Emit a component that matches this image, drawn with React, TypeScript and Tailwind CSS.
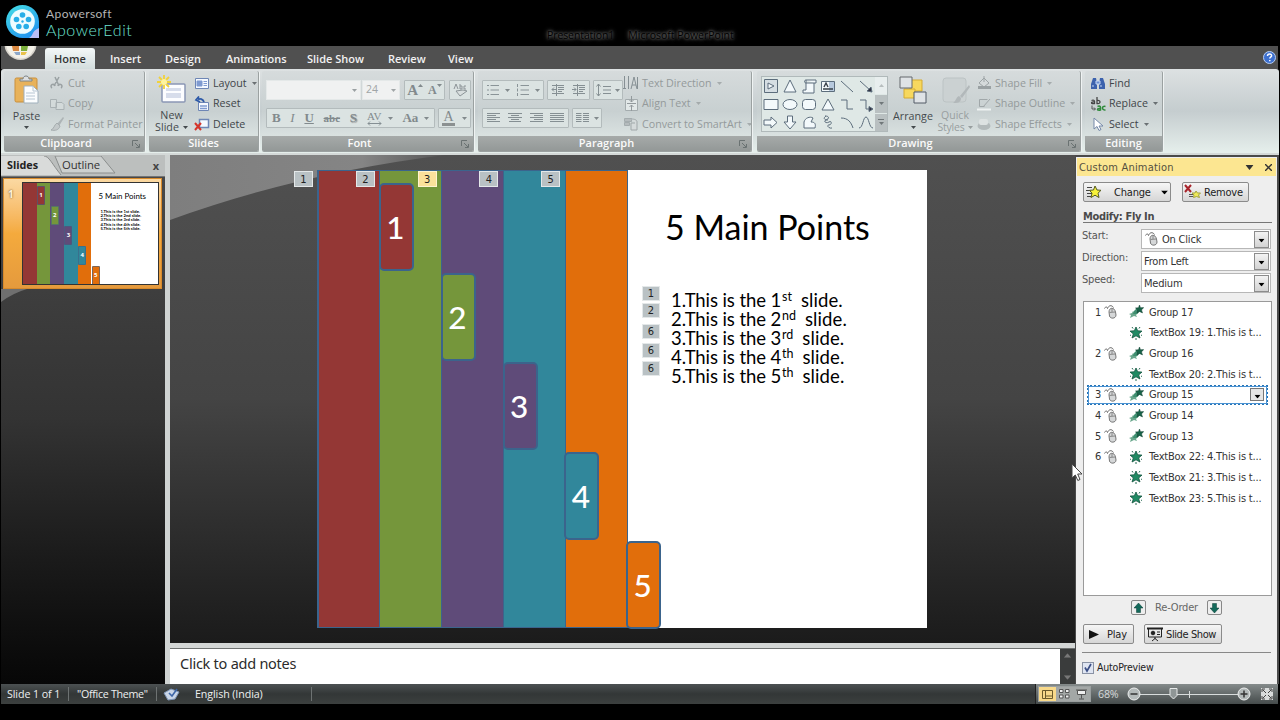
import type { CSSProperties, ReactNode } from 'react';
import clsx from 'clsx';

const COLORS = ['#943735', '#75963b', '#5f4b79', '#31879b', '#e16e0b'];

const POINTS = [
  { n: 1, suffix: 'st' },
  { n: 2, suffix: 'nd' },
  { n: 3, suffix: 'rd' },
  { n: 4, suffix: 'th' },
  { n: 5, suffix: 'th' },
];

const EFFECTS = [
  { order: '1', kind: 'path', name: 'Group 17' },
  { order: '', kind: 'star', name: 'TextBox 19: 1.This is t...' },
  { order: '2', kind: 'path', name: 'Group 16' },
  { order: '', kind: 'star', name: 'TextBox 20: 2.This is t...' },
  { order: '3', kind: 'path', name: 'Group 15', selected: true },
  { order: '4', kind: 'path', name: 'Group 14' },
  { order: '5', kind: 'path', name: 'Group 13' },
  { order: '6', kind: 'star', name: 'TextBox 22: 4.This is t...' },
  { order: '', kind: 'star', name: 'TextBox 21: 3.This is t...' },
  { order: '', kind: 'star', name: 'TextBox 23: 5.This is t...' },
];

function Caret({ className }: { className?: string }) {
  return (
    <svg className={clsx('shrink-0', className)} width="5" height="3" viewBox="0 0 5 3">
      <path d="M0 0h5L2.5 3z" fill="currentColor" />
    </svg>
  );
}

/* ---------- Title area ---------- */

function TitleBar() {
  return (
    <div className="h-[46px] flex shrink-0">
      <svg className="ml-[6px] mt-[4px] shrink-0" width="34" height="35" viewBox="0 0 34 35">
        <defs>
          <linearGradient id="reel" x1="0" y1="0" x2="0.6" y2="1">
            <stop offset="0" stopColor="#46e0e6" />
            <stop offset="1" stopColor="#2396ee" />
          </linearGradient>
        </defs>
        <path d="M16.500 1a16.500 16.500 0 1 0 0 33H33V17.500A16.500 16.500 0 0 0 16.500 1z" fill="url(#reel)" />
        <path d="M33 24v10H23c2-1 3-3 4-5s3-4 6-5z" fill="#b9bdf5" />
        <circle cx="16.500" cy="17.500" r="12.300" fill="#eefcff" />
        <g fill="#27aee8">
          <circle cx="16.500" cy="11" r="2.800" />
          <circle cx="10.500" cy="15.500" r="2.800" />
          <circle cx="22.500" cy="15.500" r="2.800" />
          <circle cx="12.800" cy="22.500" r="2.800" />
          <circle cx="20.200" cy="22.500" r="2.800" />
          <circle cx="16.500" cy="17.500" r="1.200" />
        </g>
      </svg>
      <div className="ml-[6px] w-[501px] pt-[6px] font-['Lato',sans-serif]">
        <div className="text-[12px] leading-[15px] tracking-[0.4px] text-[#b4b4b4]">Apowersoft</div>
        <div className="text-[16px] leading-[18px] tracking-[0.55px] font-light text-[#6fe3d2]">ApowerEdit</div>
      </div>
      <div className="pt-[28px] flex gap-[14px] text-[10.500px] leading-[15px] text-black whitespace-nowrap [text-shadow:0_0_3px_#888,0_0_5px_#777]">
        <span className="-tracking-[0.1px]">Presentation1</span>
        <span>Microsoft PowerPoint</span>
      </div>
    </div>
  );
}

function TabBar() {
  return (
    <div className="h-[23px] ml-px mr-[2px] bg-[#505050] flex text-[#f2f2f2] shrink-0 overflow-hidden font-semibold">
      <svg className="ml-[3px] shrink-0" width="33" height="15" viewBox="0 0 33 15">
        <circle cx="16.500" cy="-2" r="16" fill="#d8d4cc" />
        <circle cx="16.500" cy="-2" r="14.500" fill="#f4f1e8" />
        <path d="M8 0h7v5H9z" fill="#d98841" />
        <path d="M17 0h7l-1 5h-6z" fill="#7cae3b" />
        <path d="M10 6h6v3h-4z" fill="#8fa8c8" />
        <path d="M17 6h6l-2 3h-4z" fill="#e8c14a" />
      </svg>
      <div className="ml-[8px] mt-[2px] w-[50px] h-[21px] rounded-t-[3px] bg-gradient-to-b from-[#f4f8f8] to-[#d3dddd] text-[#333] text-center leading-[22px] text-[11px]">Home</div>
      <div className="flex h-[25px] items-center text-[11px] leading-none whitespace-nowrap">
        <span className="w-[56px] pl-[15px]">Insert</span>
        <span className="w-[61px] pl-[14px]">Design</span>
        <span className="w-[81px] pl-[14px]">Animations</span>
        <span className="w-[81px] pl-[14px]">Slide Show</span>
        <span className="w-[60px] pl-[14px]">Review</span>
        <span className="pl-[14px]">View</span>
      </div>
      <svg className="ml-auto mr-[2px] mt-[5px]" width="13" height="13" viewBox="0 0 13 13">
        <circle cx="6.500" cy="6.500" r="6" fill="#3d70cf" stroke="#b7cdf2" />
        <path d="M4.500 5c0-3 4.500-2.500 4 0-.3 1-1.700 1.200-1.700 2.600M6.800 9v1.200" stroke="#fff" strokeWidth="1.500" fill="none" />
      </svg>
    </div>
  );
}

/* ---------- Ribbon ---------- */

function Group({ label, className, launcher, children }: { label: string; className: string; launcher?: boolean; children: ReactNode }) {
  return (
    <div className={clsx('h-[81px] shrink-0 flex flex-col rounded-[2px] overflow-hidden border-r border-b border-[#9ba1a1] bg-gradient-to-b from-[#d6dbdc] via-[#c8d0d1] to-[#e4ecea] shadow-[1px_0_0_#eff3f3]', className)}>
      <div className="h-[65px] flex">{children}</div>
      <div className="h-[15px] flex bg-gradient-to-b from-[#a6aaa9] to-[#939897] text-[#fafafa] text-[11px] leading-[14px] font-semibold">
        <span className="flex-1 text-center">{label}</span>
        {launcher && (
          <svg className="mt-[4px] mx-[4px]" width="8" height="8" viewBox="0 0 8 8" fill="none" stroke="#6a7272">
            <path d="M.5 6V.5H6M3 3l4 4M7.500 4v3.500H4" />
          </svg>
        )}
      </div>
    </div>
  );
}

function Row({ icon, label, caret, disabled }: { icon: ReactNode; label: string; caret?: boolean; disabled?: boolean }) {
  return (
    <div className={clsx('h-[20.500px] flex items-center text-[10.700px] leading-none whitespace-nowrap', disabled ? 'text-[#949a9b]' : 'text-[#3f4549]')}>
      <svg className="mr-[3px] shrink-0" width="16" height="16" viewBox="0 0 16 16" fill="none">{icon}</svg>
      <span>{label}</span>
      {caret && <Caret className="ml-[5px] opacity-70" />}
    </div>
  );
}

function Box({ className, children }: { className: string; children: ReactNode }) {
  return (
    <div className={clsx('h-[20px] border border-[#b3bbbc] bg-[#dbe3e2] rounded-[1px] flex items-center justify-around text-[#828a8d] shrink-0', className)}>
      {children}
    </div>
  );
}

function Lines({ rows }: { rows: [number, number][] }) {
  return (
    <svg width="14" height="12" viewBox="0 0 14 12" stroke="#858f93" strokeWidth="1.200">
      {rows.map(([x1, x2], i) => (
        <path key={i} d={`M${x1} ${i * 2 + 1.5}H${x2}`} />
      ))}
    </svg>
  );
}

function ListIcon({ numbered }: { numbered?: boolean }) {
  return (
    <svg width="14" height="14" viewBox="0 0 14 14" stroke="#8a9498">
      <path d="M4.500 2.500H13M4.500 7H13M4.500 11.500H13" />
      <path d={numbered ? 'M1.500 1v3M1.500 5.500v3M1.500 10v3' : 'M1 2.500h2M1 7h2M1 11.500h2'} />
    </svg>
  );
}

function IndentIcon({ flip }: { flip?: boolean }) {
  return (
    <svg width="14" height="14" viewBox="0 0 14 14" stroke="#858f93" fill="none">
      <path d="M1 2.500h12M7 4.500h6M7 6.500h6M7 8.500h4M1 10.500h12M5.500 1v12" />
      <path d={flip ? 'M5 6.500H1M3 4.500l-2 2 2 2' : 'M0 6.500h4M2 4.500l2 2-2 2'} />
    </svg>
  );
}

const SHAPES: ReactNode[] = [
  <><path d="M1.500 1.500h13v13h-13z" fill="#d5dee3" /><path d="M5 5l6 3-6 3z" /></>,
  <path d="M8 2l6 12H2z" />,
  <path d="M5 2h10v3h-2v10H2v-3h3zM5 2c-2 0-2 3 0 3h8" />,
  <><path d="M1.500 3.500h13v10h-13z" /><path d="M9 4h5v9H9z" fill="#b7c9dd" stroke="none" /><path d="M4 9l2-4 2 4M3 11h10" stroke="#39414a" strokeWidth="1.400" /></>,
  <path d="M2 3l12 11" />,
  <><path d="M2 3l11 10" /><path d="M14 14l-5-1 4-4z" fill="#334" /></>,
  <path d="M1 3.500h14v10H1z" />,
  <ellipse cx="8" cy="8.500" rx="7" ry="5" />,
  <rect x="1.500" y="3.500" width="13" height="10" rx="3" />,
  <path d="M8 3l6 11H2z" />,
  <path d="M2 4h6v9h6" fill="none" />,
  <><path d="M2 4h6v9h4" fill="none" /><path d="M11 10.500v5l4-2.500z" fill="#334" /></>,
  <path d="M1 6h7V3l6 5.500-6 5.500v-3H1z" />,
  <path d="M5.500 2v6H2l6 7 6-7h-3.500V2z" />,
  <path d="M3 14V8c1-4 6-6 9-4l-2 4c4 0 5 2 4 6z" />,
  <path d="M5 2c5 0 4 3 1 4s0 4 3 2 3 3 0 3 0 4 3 3M6 2c-3 2-2 4 2 4" fill="none" />,
  <path d="M2 4c7 0 10 4 12 10" fill="none" />,
  <path d="M1 14C5 14 5 3 8 3s3 11 7 11" fill="none" />,
];

function Ribbon() {
  return (
    <div className="h-[86px] mx-px pl-[3px] pt-[2px] flex shrink-0 rounded-t-[3px] bg-gradient-to-b from-[#dde1e2] via-[#c5cdcf] to-[#e6efec] border-b-2 border-[#d4d9d8]">
      <Group label="Clipboard" className="w-[141px]" launcher>
        <div className="w-[45px] flex flex-col items-center text-[10.700px] leading-[12px] text-[#444a4d] pt-[4px]">
          <svg width="26" height="30" viewBox="0 0 26 30">
            <rect x="1" y="3" width="22" height="24" rx="1.500" fill="#e8b25a" stroke="#c98f3c" />
            <path d="M6 6V4h3c0-4 6-4 6 0h3v2z" fill="#dcdfe2" stroke="#7d8386" />
            <path d="M10 11h9l5 5v12H10z" fill="#fbfdfe" stroke="#9fb0bd" />
            <path d="M19 11v5h5M12 18h9M12 21h9M12 24h9" stroke="#b7c6d3" fill="none" />
          </svg>
          <span className="mt-[5px]">Paste</span>
          <Caret className="mt-[4px]" />
        </div>
        <div className="pt-[2px]">
          <Row disabled label="Cut" icon={<path d="M6 2l4 9M10 2L5 11M3 13a2 2 0 1 1 3-2M12 13a2 2 0 1 0-3-2" stroke="#9aa1a3" strokeWidth="1.500" />} />
          <Row disabled label="Copy" icon={<path d="M1.500 3.500h6v8h-6zM7 6.500h6l2 2v5H7z" fill="#d3dada" stroke="#a9b1b3" />} />
          <Row disabled label="Format Painter" icon={<><path d="M14 1L8 8l2 2 5-8z" fill="#adb4b6" /><path d="M8 7l3 3c-1 4-5 5-9 4 3-1 3-5 6-7z" fill="#c3c9ca" stroke="#a5acae" /></>} />
        </div>
      </Group>

      <Group label="Slides" className="w-[110px] ml-[4px]">
        <div className="w-[45px] flex flex-col items-center text-[10.700px] leading-[12px] text-[#444a4d] pt-[4px]">
          <svg width="30" height="30" viewBox="0 0 30 30">
            <rect x="5" y="9" width="23" height="18" rx="1" fill="#fcfdff" stroke="#8b97b5" strokeWidth="1.500" />
            <path d="M9 13h15v3H9zM9 18h15v5H9z" fill="#d7ddeb" />
            <path d="M7 0v14M0 7h14M2 2l10 10M12 2L2 12" stroke="#f1d23a" strokeWidth="1.800" />
            <circle cx="7" cy="7" r="3" fill="#fdf3a0" />
          </svg>
          <span className="mt-[4px]">New</span>
          <span className="flex items-center gap-[4px]">Slide <Caret /></span>
        </div>
        <div className="pt-[2px]">
          <Row label="Layout" caret icon={<><path d="M1.500 3.500h13v10h-13z" fill="#f5f9ff" stroke="#6e86b5" /><path d="M3 6h5v5H3zM9.500 6.500H13M9.500 8.500H13M9.500 10.500H13" fill="#7f9ad0" stroke="#7f9ad0" /></>} />
          <Row label="Reset" icon={<><path d="M4.500 6.500h10v8h-10z" fill="#f5f9ff" stroke="#6e86b5" /><path d="M6 10h7M6 12.500h7" stroke="#7f9ad0" strokeWidth="1.500" /><path d="M10 6C9 3 6 2 4 3.500M5 .5L2 4l4 2" stroke="#2e5aa8" strokeWidth="1.800" /></>} />
          <Row label="Delete" icon={<><path d="M5.500 3.500h9v8h-9z" fill="#f5f9ff" stroke="#6e86b5" strokeWidth="1.500" /><path d="M1 7l6 7M7 7l-6 7" stroke="#d5352b" strokeWidth="2" /></>} />
        </div>
      </Group>

      <Group label="Font" className="w-[212px] ml-[3px]" launcher>
        <div className="pl-[4px] pt-[9px] font-['Liberation_Serif',serif]">
          <div className="flex">
            <div className="w-[95px] h-[20px] bg-[#f0f1f1] border border-[#e4e8e8] flex items-center justify-end pr-[3px] text-[#9aa0a2]"><Caret /></div>
            <div className="w-[38px] h-[20px] ml-px bg-[#f0f1f1] border border-[#e4e8e8] flex items-center justify-between px-[3px] text-[#a0a5a7] text-[10.500px] font-['Open_Sans',sans-serif]">24<Caret /></div>
            <Box className="w-[41px] ml-[4px]">
              <span className="flex text-[15px] leading-[16px] font-bold">A<Caret className="rotate-180 mt-[2px]" /></span>
              <span className="flex text-[12px] leading-[14px] font-bold">A<Caret className="mt-px" /></span>
            </Box>
            <Box className="w-[22px] ml-[4px]">
              <svg width="16" height="16" viewBox="0 0 16 16" fill="none" stroke="#8d9598">
                <path d="M2 7l2-5 2 5M8 2v5h2V4H8M14 4h-2v3h2M4 9l4 5 7-5-4-1z" fill="#d9dfdf" />
              </svg>
            </Box>
          </div>
          <div className="flex mt-[8px]">
            <Box className="w-[169px]">
              <b className="text-[13px]">B</b>
              <i className="text-[13px]">I</i>
              <b className="text-[13px] underline">U</b>
              <b className="text-[11px] line-through">abc</b>
              <b className="text-[13px] [text-shadow:1px_1px_1px_#999]">S</b>
              <span className="flex flex-col items-center text-[11px] leading-[10px]">
                AV
                <svg width="15" height="5" viewBox="0 0 15 5" fill="none" stroke="#858f93"><path d="M1 2.500h13M3 .5l-2 2 2 2M12 .5l2 2-2 2" /></svg>
              </span>
              <Caret className="-ml-[4px]" />
              <b className="text-[13px]">Aa</b>
              <Caret className="-ml-[4px]" />
            </Box>
            <Box className="w-[33px] ml-[3px]">
              <span className="text-[14px] leading-[13px] border-b-[3px] border-[#8b9091] px-[1px]">A</span>
              <Caret />
            </Box>
          </div>
        </div>
      </Group>

      <Group label="Paragraph" className="w-[274px] ml-[4px]" launcher>
        <div className="pl-[4px] pt-[9px] w-[147px]">
          <div className="flex">
            <Box className="w-[62px]"><ListIcon /><Caret className="-ml-[2px]" /><ListIcon numbered /><Caret className="-ml-[2px]" /></Box>
            <Box className="w-[43px] ml-[3px]"><IndentIcon flip /><IndentIcon /></Box>
            <Box className="w-[30px] ml-[3px]">
              <svg width="15" height="14" viewBox="0 0 15 14" stroke="#858f93" fill="none">
                <path d="M7 3.500h8M7 7h8M7 10.500h8M2.500 1v12M.5 3.500l2-2.500 2 2.500M.5 10.500l2 2.500 2-2.500" />
              </svg>
              <Caret />
            </Box>
          </div>
          <div className="flex mt-[8px]">
            <Box className="w-[87px]">
              <Lines rows={[[0, 13], [0, 9], [0, 13], [0, 9], [0, 13]]} />
              <Lines rows={[[0, 14], [3, 11], [0, 14], [3, 11], [1, 13]]} />
              <Lines rows={[[1, 14], [5, 14], [1, 14], [5, 14], [1, 14]]} />
              <Lines rows={[[0, 14], [0, 14], [0, 14], [0, 14], [0, 14]]} />
            </Box>
            <Box className="w-[30px] ml-[3px]">
              <svg width="13" height="12" viewBox="0 0 13 12" stroke="#858f93">
                <path d="M0 1.500h5.500M0 3.500h5.500M0 5.500h5.500M0 7.500h5.500M0 9.500h5.500M7 1.500h6M7 3.500h6M7 5.500h6M7 7.500h6M7 9.500h6" />
              </svg>
              <Caret />
            </Box>
          </div>
        </div>
        <div className="pt-[2px]">
          <Row disabled caret label="Text Direction" icon={<path d="M1.500 1v13M5.500 1v13M8 14l3-12 3 12M9 10h4M0 13.500h3M14.500 2v12" stroke="#858f93" />} />
          <Row disabled caret label="Align Text" icon={<><path d="M2.500 3.500h12v11h-12z" fill="#e2e8e8" stroke="#a4acae" /><path d="M8.500 0v6M8.500 15V9M6.500 4l2 2 2-2M6.500 11l2-2 2 2M4 7.500h9" stroke="#92999c" /></>} />
          <Row disabled caret label="Convert to SmartArt" icon={<><path d="M1.500 2.500h7v3h-7zM1.500 6.500h5v3h-5z" fill="#b5bbbd" stroke="#a4acae" /><path d="M8 3c4 0 6 1 6 3v8H8V7h4" fill="#d5dadb" stroke="#a0a7a9" /></>} />
        </div>
      </Group>

      <Group label="Drawing" className="w-[324px] ml-[5px]" launcher>
        <div className="mt-[5px] ml-[4px] w-[127px] h-[56px] border border-[#b0b9ba] bg-[#dfe8e6] flex shrink-0">
          <div className="w-[113px] grid grid-cols-6 grid-rows-3">
            {SHAPES.map((shape, i) => (
              <svg key={i} className="m-auto" width="16" height="16" viewBox="0 0 16 16" fill="#f3f9fb" stroke="#5c6d7c">{shape}</svg>
            ))}
          </div>
          <div className="w-[12px] flex flex-col gap-px text-[#707779]">
            <div className="flex-1 bg-[#e8eeee] flex items-center justify-center"><Caret className="rotate-180 opacity-40" /></div>
            <div className="flex-1 bg-[#b9c0c1] flex items-center justify-center"><Caret /></div>
            <div className="flex-1 bg-[#b9c0c1] flex flex-col items-center justify-center gap-[2px]"><span className="w-[6px] h-px bg-[#707779]" /><Caret /></div>
          </div>
        </div>
        <div className="w-[50px] shrink-0 flex flex-col items-center text-[10.700px] leading-[12px] text-[#444a4d] pt-[4px]">
          <svg width="30" height="30" viewBox="0 0 30 30">
            <path d="M12 5h12v11H12z" fill="#f7d85e" stroke="#d5ab32" />
            <path d="M6 14h11v9H6z" fill="#f7d85e" stroke="#d5ab32" />
            <path d="M2 2h12v11H2z" fill="#dfe3e6" stroke="#64696d" />
            <path d="M16 17h12v11H16z" fill="#dfe3e6" stroke="#525a66" />
          </svg>
          <span className="mt-[5px]">Arrange</span>
          <Caret className="mt-[4px]" />
        </div>
        <div className="w-[34px] shrink-0 flex flex-col items-center text-[10.500px] leading-[12px] text-[#989e9f] pt-[4px]">
          <svg width="30" height="30" viewBox="0 0 30 30">
            <rect x="3" y="3" width="23" height="24" rx="3" fill="#cbd1d2" stroke="#bcc3c4" />
            <path d="M29 10l-9 11 2 2 8-11zM19 21c-3 1-3 5-6 7 4 0 8 0 8-5z" fill="#b2b8ba" />
          </svg>
          <span className="mt-[4px]">Quick</span>
          <span className="flex items-center gap-[3px] whitespace-nowrap -tracking-[0.2px]">Styles <Caret /></span>
        </div>
        <div className="pt-[2px] pl-[4px]">
          <Row disabled caret label="Shape Fill" icon={<><path d="M3 8l5-5 5 5-5 4z" fill="#d5dadb" stroke="#9da4a6" /><path d="M2 12.500h13" stroke="#9aa1a3" strokeWidth="3" /><path d="M8 1v6" stroke="#9da4a6" /></>} />
          <Row disabled caret label="Shape Outline" icon={<><path d="M3.500 3.500h8M3.500 3.500v7h5M14 3l-7 8" stroke="#a0a7a9" /><path d="M1 13.500h14" stroke="#eef2f2" strokeWidth="2" /></>} />
          <Row disabled caret label="Shape Effects" icon={<><ellipse cx="8" cy="10" rx="6.500" ry="4" fill="#b3babb" /><rect x="3" y="3" width="9" height="6" rx="2" fill="#dde2e2" /></>} />
        </div>
      </Group>

      <Group label="Editing" className="w-[78px] ml-[4px]">
        <div className="pt-[2px] pl-[5px]">
          <Row label="Find" icon={<><path d="M3 3h3l1 5v6H1V9zM10 3h3l2 6v5H9V8z" fill="#3c62ad" /><path d="M6 6h4v3H6zM3 10v2M11 10v2" fill="#6b8fd0" stroke="#c4d6f4" /></>} />
          <Row label="Replace" caret icon={<><path d="M1.500 4.500c2-1 3 0 3 1v2c-4 1-4-2 0-1.500M7 1v6.500c4 1 4-4 0-3" stroke="#444" strokeWidth="1.300" /><path d="M2 9.500v3.500h3M4 11.500L5.500 13 4 14.500" stroke="#555" /><path d="M7.500 10.500c2-1 3 0 3 1v2.500c-4 1-4-2 0-1.500M15.500 10.500c-4-1-4 4 0 3.500" stroke="#2e8a3a" strokeWidth="1.500" /></>} />
          <Row label="Select" caret icon={<path d="M4 2v11l3-2.500 2 4 2-1-2-3.500h4z" fill="#fff" stroke="#7488a8" />} />
        </div>
      </Group>
    </div>
  );
}

/* ---------- Left pane ---------- */

function Thumbnail() {
  return (
    <div className="relative w-[137px] h-[103px] border border-[#333] bg-white flex overflow-hidden">
      {COLORS.map((c) => (
        <div key={c} className="w-[13.700px] h-full shrink-0" style={{ background: c }} />
      ))}
      <div className="pt-[7px] pl-[7px] text-black font-['Lato',sans-serif] whitespace-nowrap">
        <div className="text-[7.900px] leading-[12px]">5 Main Points</div>
        <div className="pl-[2px] pt-[8px] text-[4.200px] leading-[4.200px] font-bold">
          {POINTS.map(({ n, suffix }) => (
            <div key={n}>{n}.This is the {n}{suffix} slide.</div>
          ))}
        </div>
      </div>
      {COLORS.map((c, i) => (
        <div
          key={c}
          className="absolute w-[8px] h-[19px] rounded-[1px] border border-[#3f6183]/60 text-white text-[6px] leading-[17px] text-center font-bold"
          style={{ background: c, left: 14 + i * 13.7, top: 3 + i * 20 }}
        >
          {i + 1}
        </div>
      ))}
    </div>
  );
}

function SlidesPane() {
  return (
    <div className="w-[164px] shrink-0 flex flex-col bg-gradient-to-b from-[#4a4a4a] via-[#333] to-[#070707]">
      <div className="h-[22px] shrink-0 bg-[#bcbfbe] border-b border-[#747474] flex items-center relative">
        <svg className="absolute left-0 top-px" width="120" height="20" viewBox="0 0 120 20">
          <path d="M54 0h46l14 17H61z" fill="#cdd0cf" stroke="#8b8e8d" />
          <path d="M0 0h43c5 0 8 8 17 19H0z" fill="#d9dbda" />
          <path d="M43 0c5 0 8 8 17 19" fill="none" stroke="#8b8e8d" />
        </svg>
        <span className="relative w-[61px] pl-[6px] font-bold text-[10.800px] text-[#222]">Slides</span>
        <span className="relative text-[11.300px] -tracking-[0.1px] text-[#333]">Outline</span>
        <span className="relative ml-auto mr-[6px] text-[11px] text-[#444] font-bold leading-none">x</span>
      </div>
      <div className="mt-px ml-[2px] w-[159px] h-[111px] shrink-0 flex pt-[3px] border border-[#d88a2b] bg-gradient-to-b from-[#fbd9a2] via-[#f4aa3d] to-[#e59a3d]">
        <span className="w-[18px] pl-[4px] pt-[7px] text-[10px] leading-none font-bold text-[#fff3d9] [text-shadow:0_0_2px_#5a3a10]">1</span>
        <Thumbnail />
      </div>
      <svg className="shrink-0" width="26" height="14" viewBox="0 0 26 14"><path d="M0 0h26Q12 4 0 13z" fill="#6f6f6f" /></svg>
    </div>
  );
}

/* ---------- Slide canvas ---------- */

function Tag({ children, active, className, style }: { children: ReactNode; active?: boolean; className?: string; style?: CSSProperties }) {
  return (
    <div
      className={clsx(
        "absolute border text-[11px] text-center text-[#222] font-['DejaVu_Sans_Condensed','DejaVu_Sans',sans-serif]",
        active ? 'bg-[#fbe19a] border-[#fff3cf]' : 'bg-[#b9c1c4] border-[#e4e8e9]',
        className,
      )}
      style={style}
    >
      {children}
    </div>
  );
}

function Slide() {
  const tagTops = [116, 133, 154, 173, 191];
  return (
    <div className="relative ml-[147px] mt-[15px] w-[610px] h-[458px] bg-white flex font-['Lato',sans-serif] text-black">
      {COLORS.map((c, i) => (
        <div key={c} className="w-[62px] h-full border-y border-l-2 border-[#3b648c] shrink-0" style={{ background: c, borderLeftWidth: i === 0 ? 2 : 1.5 }} />
      ))}
      <div className="border-l border-[#3b648c] pl-[37px] pt-[36px] whitespace-nowrap">
        <div className="text-[34px] leading-[42px]">5 Main Points</div>
        <div className="pl-[6px] pt-[42px] text-[18.500px] leading-[20px]">
          {POINTS.map(({ n, suffix }) => (
            <div key={n} className="h-[19px] flex">
              <span className="w-[111px] -tracking-[0.08px]">{n}.This is the {n}</span>
              <span className="text-[12.500px] leading-[13px]">{suffix}</span>
              <span className="ml-[9px] tracking-[0.1px]">slide.</span>
            </div>
          ))}
        </div>
      </div>
      {COLORS.map((c, i) => (
        <div
          key={c}
          className="absolute w-[35px] h-[88px] rounded-[5px] border-2 border-[#3b648c] text-white text-[31.500px] leading-[85px] text-center pr-[2px] font-medium"
          style={{ background: c, left: 62 + i * 61.8, top: 13 + i * 89.5 }}
        >
          {i + 1}
        </div>
      ))}
      {[0, 1, 2, 3, 4].map((i) => (
        <Tag key={i} active={i === 2} className="w-[19px] h-[16px] leading-[15px]" style={{ left: -23 + i * 61.8, top: 1 }}>{i + 1}</Tag>
      ))}
      {['1', '2', '6', '6', '6'].map((n, i) => (
        <Tag key={i} className="w-[18px] h-[15px] leading-[14px]" style={{ left: 325, top: tagTops[i] }}>{n}</Tag>
      ))}
    </div>
  );
}

function Editor() {
  return (
    <div className="w-[905px] shrink-0 flex flex-col">
      <div className="relative h-[488px] bg-gradient-to-b from-[#505050] via-[#444] to-[#1b1b1b] overflow-hidden">
        <svg className="absolute left-0 top-0" width="300" height="70" viewBox="0 0 300 70">
          <defs>
            <linearGradient id="swoosh" x1="0" y1="0" x2="1" y2="0">
              <stop offset="0" stopColor="#7e7e7e" />
              <stop offset="0.7" stopColor="#858585" />
              <stop offset="1" stopColor="#555" />
            </linearGradient>
          </defs>
          <path d="M0 0h275Q130 18 0 65z" fill="url(#swoosh)" />
        </svg>
        <Slide />
      </div>
      <div className="h-[6px] bg-[#d3d6d5] border-b border-[#6e7170]" />
      <div className="flex-1 flex">
        <div className="w-[890px] bg-white pl-[10px] pt-[5px] text-[14.500px] leading-[19px] -tracking-[0.25px] text-[#2b2b2b] font-['Noto_Sans',sans-serif]">Click to add notes</div>
        <div className="flex-1 bg-[#3a3c3c] flex flex-col items-center justify-between py-[5px] text-[#777]">
          <Caret className="rotate-180 scale-150" />
          <Caret className="scale-150" />
        </div>
      </div>
    </div>
  );
}

/* ---------- Custom Animation pane ---------- */

function MouseIcon() {
  return (
    <svg width="13" height="14" viewBox="0 0 13 14" fill="none">
      <path d="M.5 3.500c1-2 2.500-2 3 0 1-3 4-4 6-1" stroke="#666" />
      <path d="M5 7c0-5 5.500-5 6.500 0l.5 3c0 4-6 4-6.500 1z" fill="#d5d7d8" stroke="#777" />
      <path d="M8 3.500V7M5.500 7.500L11 7" stroke="#888" />
    </svg>
  );
}

function EffectIcon({ kind }: { kind: string }) {
  if (kind === 'path') {
    return (
      <svg width="15" height="14" viewBox="0 0 15 14">
        <path d="M1 13l1-3-2-1 3-1 1-2 2 2h3L7 10l1 2-3-1z" fill="#69a78c" />
        <path d="M4 9l1-3 3-3 3 3-3 3z" fill="#3f8f70" />
        <path d="M10.500 0l1 2.800 3.200-.2-2.200 2.300 1 3-3-1.400L8 8l.6-3L6.500 3l3-.3z" fill="#176348" stroke="#123f30" strokeWidth=".5" />
      </svg>
    );
  }
  return (
    <svg width="14" height="14" viewBox="0 0 14 14">
      <path d="M7 1l1.700 3.800 4.300.3-3.300 2.800L11 12 7 9.800 3 12l1.300-4.100L1 5.100l4.300-.3z" fill="#1f8a63" stroke="#155440" strokeWidth=".8" />
      <path d="M3 1l1 1.500M11 1l-1 1.500M7 12v2M1 9.500l1-.5M13 9.500l-1-.5" stroke="#276b53" />
    </svg>
  );
}

function DropButton() {
  return (
    <div className="w-[15px] h-[17px] border border-[#8c8c8c] bg-gradient-to-b from-[#f3f3f3] to-[#d3d3d3] flex items-center justify-center text-black">
      <Caret className="scale-125 mt-[2px]" />
    </div>
  );
}

function Field({ label, icon, value }: { label: string; icon?: ReactNode; value: string }) {
  return (
    <div className="h-[22px] flex">
      <span className="w-[59px] -ml-px text-[#555] leading-[14px]">{label}</span>
      <div className="w-[130px] h-[20px] bg-white border border-[#b7b7b7] flex items-center gap-[4px] pl-[2px] pr-[1px] text-[#333]">
        {icon && <span className="pl-px">{icon}</span>}
        <span className="flex-1">{value}</span>
        <DropButton />
      </div>
    </div>
  );
}

function PaneButton({ className, children }: { className: string; children: ReactNode }) {
  return (
    <div className={clsx('h-[20px] border border-[#8b8b8b] rounded-[2px] bg-gradient-to-b from-[#f6f6f6] to-[#d6d6d6] flex items-center text-[#222]', className)}>
      {children}
    </div>
  );
}

function AnimationPane() {
  return (
    <div className="ml-px w-[201px] h-[528px] mt-[2px] bg-[#eeeeee] flex flex-col text-[11px] leading-[13px] whitespace-nowrap -tracking-[0.2px] font-['DejaVu_Sans_Condensed','DejaVu_Sans',sans-serif]">
      <div className="h-[18px] mx-px mt-px bg-[#fce691] flex items-center pl-[2px] text-[#55503f] shrink-0">
        <span className="flex-1 tracking-[0.2px]">Custom Animation</span>
        <Caret className="scale-[1.6] text-[#333] mr-[13px]" />
        <svg className="mr-[4px]" width="7" height="7" viewBox="0 0 7 7" stroke="#333" strokeWidth="1.400"><path d="M0 0l7 7M7 0L0 7" /></svg>
      </div>
      <div className="pl-[7px] pt-[6px]">
        <div className="flex gap-[11px]">
          <PaneButton className="w-[88px] pl-[2px]">
            <svg width="16" height="14" viewBox="0 0 16 14"><path d="M1 2.500h5M0 5.500h5M1 8.500h5M1 11.500h4" stroke="#444" /><path d="M9 1l2 4 4 .3-3 2.900 1 4.300-4-2.300-4 2.300 1-4.300L3.500 5.300 7.500 5z" fill="#f7f23a" stroke="#555b20" /></svg>
            <span className="ml-[12px] flex-1">Change</span>
            <Caret className="scale-[1.4] text-black mr-[3px]" />
          </PaneButton>
          <PaneButton className="w-[67px] pl-[1px]">
            <svg width="17" height="16" viewBox="0 0 17 16"><path d="M1 1l6 7M7 1L1 8" stroke="#a8242b" strokeWidth="2" /><path d="M5 10.500h4M5 12.500h4" stroke="#555" /><path d="M12 7l1.500 2h3l-2 2 1 2.500-3-1-3 1 .5-2.500-2-2h3z" fill="#efea5a" stroke="#a5a341" /></svg>
            <span className="ml-[3px]">Remove</span>
          </PaneButton>
        </div>
        <div className="mt-[9px] mb-[6px] w-[189px] h-[12px] border-b border-[#777] font-bold text-[#4a4a4a] leading-[11px] -tracking-[0.35px]">Modify: Fly In</div>
        <Field label="Start:" icon={<MouseIcon />} value="On Click" />
        <Field label="Direction:" value="From Left" />
        <Field label="Speed:" value="Medium" />
      </div>
      <div className="ml-[7px] mt-[6px] w-[189px] h-[295px] shrink-0 bg-white border border-[#9a9a9a] text-[#333]">
        {EFFECTS.map((e) => (
          <div
            key={e.name}
            className={clsx('mx-[3px] h-[20.650px] flex items-center border-2', e.selected ? 'border-dotted border-[#2573b5] outline outline-1 -outline-offset-2 outline-[#4b93d3]' : 'border-transparent')}
          >
            <span className="w-[14px] pl-[6px]">{e.order}</span>
            <span className="w-[26px] pl-px">{e.order && <MouseIcon />}</span>
            <span className="w-[20px]"><EffectIcon kind={e.kind} /></span>
            <span className="flex-1">{e.name}</span>
            {e.selected && <div className="w-[14px] h-[13px] border border-[#777] bg-[#e5e5e5] flex items-center justify-center text-black mr-[2px] shrink-0"><Caret className="scale-125 mt-[3px]" /></div>}
          </div>
        ))}
      </div>
      <div className="h-[15px] mt-[4px] flex justify-center items-center gap-[9px] text-[#666]">
        <div className="w-[15px] h-[15px] border border-[#888] rounded-[2px] flex items-center justify-center">
          <svg width="9" height="10" viewBox="0 0 9 10"><path d="M4.500 0L9 5H6.500v4.500h-4V5H0z" fill="#13695a" stroke="#0b3c34" strokeWidth=".5" /></svg>
        </div>
        Re-Order
        <div className="w-[15px] h-[15px] border border-[#888] rounded-[2px] flex items-center justify-center">
          <svg width="9" height="10" viewBox="0 0 9 10"><path d="M4.500 10L9 5H6.500V.5h-4V5H0z" fill="#13695a" stroke="#0b3c34" strokeWidth=".5" /></svg>
        </div>
      </div>
      <div className="mt-[9px] ml-[7px] flex gap-[10px]">
        <PaneButton className="w-[51px] pl-[5px]">
          <svg width="10" height="9" viewBox="0 0 10 9"><path d="M0 0l10 4.500L0 9z" fill="#111" /></svg>
          <span className="ml-[8px]">Play</span>
        </PaneButton>
        <PaneButton className="w-[78px] pl-[2px]">
          <svg width="16" height="15" viewBox="0 0 16 15" fill="none" stroke="#222"><path d="M0 1.500h16" strokeWidth="2" /><path d="M1.500 2v8h13V2M8 10v2M5 14l3-2.500 3 2.500M10 5h3M10 7.500h3" /><circle cx="6" cy="6" r="1.800" fill="#222" /></svg>
          <span className="ml-[3px] -tracking-[0.4px]">Slide Show</span>
        </PaneButton>
      </div>
      <div className="mx-[6px] mt-[8px] border-b border-[#888]" />
      <div className="ml-[6px] mt-[8px] flex items-center gap-[3px] text-[10.500px] text-[#222]">
        <div className="w-[12px] h-[12px] border border-[#8a93a5] bg-[#dfe5f2]">
          <svg width="10" height="10" viewBox="0 0 10 10"><path d="M2 4.500L4 8l4-7" stroke="#3b4f86" strokeWidth="1.700" fill="none" /></svg>
        </div>
        AutoPreview
      </div>
    </div>
  );
}

/* ---------- Status bar ---------- */

function StatusBar() {
  return (
    <div className="h-[20px] ml-px mr-[2px] shrink-0 flex items-center bg-gradient-to-b from-[#4c5152] via-[#333737] to-[#3c403f] text-[#eef0f0] text-[10.700px] leading-none whitespace-nowrap">
      <span className="w-[68px] pl-[6px] h-[14px] leading-[14px] border-r border-[#6d7272] -tracking-[0.1px]">Slide 1 of 1</span>
      <span className="w-[88px] pl-[8px] h-[14px] leading-[14px] border-r border-[#6d7272] -tracking-[0.3px]">"Office Theme"</span>
      <svg className="ml-[6px]" width="17" height="14" viewBox="0 0 17 14">
        <path d="M1 6l7-4 8 3-4 7-7 1z" fill="#c9d6e8" stroke="#7e96b8" />
        <path d="M6 6l3 3 5-7" stroke="#3d66a8" strokeWidth="1.600" fill="none" />
      </svg>
      <span className="w-[132px] pl-[15px] h-[14px] leading-[14px] border-r border-[#6d7272] -tracking-[0.1px]">English (India)</span>
      <div className="ml-auto w-[243px] h-full flex items-center pl-[2px] border-l border-[#222] bg-gradient-to-b from-[#858b8b] to-[#454b4b]">
        <div className="w-[53px] h-[16px] flex items-center border border-[#9a9f9f] bg-[#a3a7a6]">
          <div className="w-[17px] h-full bg-[#f8d98a] flex items-center justify-center">
            <svg width="11" height="9" viewBox="0 0 11 9" fill="none" stroke="#6b5a2b"><path d="M.5.5h10v8H.5zM3.500.5v8M3.500 6h7" /></svg>
          </div>
          <svg className="mx-auto" width="11" height="10" viewBox="0 0 11 10" fill="#eee" stroke="#555"><path d="M.5.5h3.500v3H.5zM6.500.5H10v3H6.500zM.5 6h3.500v3H.5zM6.500 6H10v3H6.500z" /></svg>
          <svg className="mx-auto" width="11" height="11" viewBox="0 0 11 11" fill="#eee" stroke="#555"><path d="M1.500 1.500h8v4h-8zM0 1h11M5.500 5.500v4M3 10h5" /></svg>
        </div>
        <span className="ml-[7px] w-[26px] text-[#d6dada] -tracking-[0.2px]">68%</span>
        <svg width="151" height="16" viewBox="0 0 151 16">
          <path d="M15 8.500h100M65.500 5v7" stroke="#d8dcdc" />
          <circle cx="10" cy="8" r="6" fill="#b4baba" stroke="#eceeee" />
          <path d="M6.500 8h7" stroke="#333" strokeWidth="1.500" />
          <path d="M46 2.500h7v7L49.500 13 46 9.500z" fill="#8f9696" stroke="#e6e9e9" />
          <circle cx="120" cy="8" r="6" fill="#b4baba" stroke="#eceeee" />
          <path d="M116.500 8h7M120 4.500v7" stroke="#333" strokeWidth="1.500" />
          <rect x="137" y="2" width="12" height="12" fill="#d9dcdc" />
          <path d="M138 6V3h3M145 3h3v3M148 10v3h-3M141 13h-3v-3M139 4l3 3M147 4l-3 3M147 12l-3-3M139 12l3-3" stroke="#444" fill="none" />
        </svg>
      </div>
    </div>
  );
}

export default function App() {
  return (
    <div className="relative w-[1280px] h-[720px] bg-black flex flex-col overflow-hidden font-['Open_Sans',sans-serif]">
      <TitleBar />
      <TabBar />
      <Ribbon />
      <div className="h-[529px] mx-px flex shrink-0 bg-[#4a4a4a]">
        <SlidesPane />
        <div className="w-[5px] bg-[#cfd3d2] shrink-0" />
        <Editor />
        <AnimationPane />
      </div>
      <StatusBar />
      <svg className="absolute left-[1071px] top-[463px]" width="12" height="19" viewBox="0 0 12 19">
        <path d="M1 1v14l3.300-3 2.500 5.500 2.200-1L6.700 11H11z" fill="#fff" stroke="#444" />
      </svg>
    </div>
  );
}
